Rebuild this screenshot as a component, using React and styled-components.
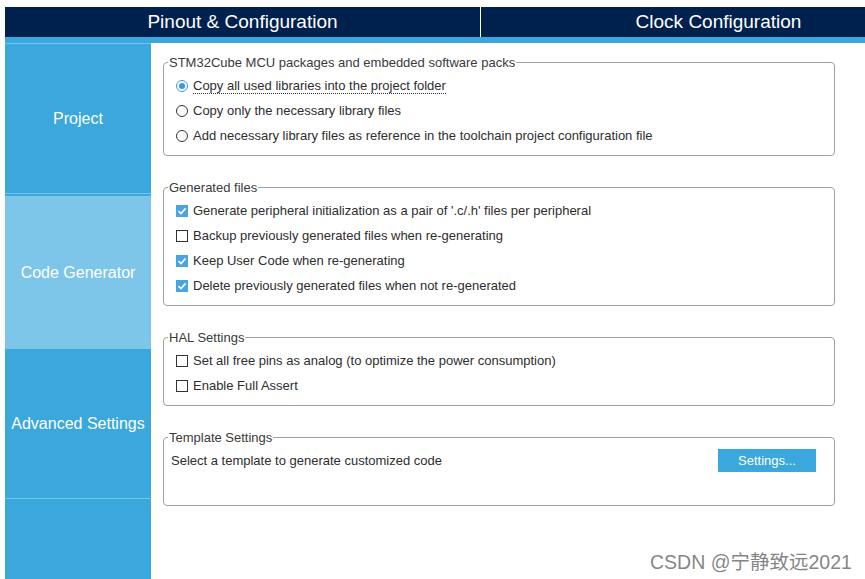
import styled, { createGlobalStyle } from 'styled-components';

const GlobalStyle = createGlobalStyle`
  html, body {
    margin: 0;
    padding: 0;
    background: #ffffff;
  }
  body {
    font-family: "Liberation Sans", Arial, sans-serif;
  }
`;

const Page = styled.div`
  position: relative;
  width: 865px;
  height: 579px;
  padding: 7px 0 0 5px;
  box-sizing: border-box;
  display: flex;
  flex-direction: column;
  overflow: hidden;
`;

const TopBar = styled.div`
  display: flex;
  height: 30px;
  background: #00204e;
  overflow: hidden;
`;

const Tab = styled.div`
  flex: 0 0 ${(p) => p.$width}px;
  display: flex;
  align-items: center;
  justify-content: center;
  color: #ffffff;
  font-size: 19px;
  white-space: nowrap;
  & + & {
    border-left: 1px solid #ffffff;
  }
`;

const Strip = styled.div`
  height: 6px;
  background: #3aa8dc;
`;

const Body = styled.div`
  flex: 1;
  display: flex;
`;

const Sidebar = styled.div`
  flex: 0 0 146px;
  background: #3aa8dc;
  border-top: 1px solid #74c4ec;
  display: flex;
  flex-direction: column;
`;

const NavItem = styled.div`
  height: ${(p) => (p.$active ? '153px' : '149px')};
  margin-bottom: ${(p) => (p.$active ? '0' : '2px')};
  border-bottom: ${(p) => (p.$active ? 'none' : '1px solid #74c4ec')};
  background: ${(p) => (p.$active ? '#7dc6e9' : 'transparent')};
  display: flex;
  align-items: center;
  justify-content: center;
  color: #ffffff;
  font-size: 16px;
`;

const Main = styled.div`
  flex: 1;
  padding: 12px 30px 0 12px;
  display: flex;
  flex-direction: column;
  gap: 24px;
`;

const Group = styled.fieldset`
  margin: 0;
  padding: 3px 12px 7px 4px;
  border: 1px solid #a0a0a0;
  border-radius: 4px;
  min-height: ${(p) => p.$minHeight || 0}px;
  box-sizing: border-box;
  display: flex;
  flex-direction: column;
`;

const Legend = styled.legend`
  padding: 0 1px;
  font-size: 13px;
  line-height: 15px;
  color: #3a3a3a;
`;

const Row = styled.div`
  height: 25px;
  display: flex;
  align-items: center;
  gap: 5px;
  padding-left: 8px;
  font-size: 13px;
  color: #2e2e2e;
`;

const Label = styled.span`
  line-height: 15px;
  border-bottom: 1px dotted ${(p) => (p.$focused ? '#333333' : 'transparent')};
`;

const Radio = styled.span`
  width: 12px;
  height: 12px;
  box-sizing: border-box;
  border-radius: 50%;
  border: 1px solid ${(p) => (p.$checked ? '#3c98e0' : '#333333')};
  background: #ffffff;
  display: flex;
  align-items: center;
  justify-content: center;
  &::after {
    content: '';
    width: 6px;
    height: 6px;
    border-radius: 50%;
    background: ${(p) => (p.$checked ? '#3c98e0' : 'transparent')};
  }
`;

const Box = styled.span`
  width: 12px;
  height: 12px;
  box-sizing: border-box;
  border: 1px solid ${(p) => (p.$checked ? '#4aa3e3' : '#333333')};
  background: ${(p) => (p.$checked ? '#4aa3e3' : '#ffffff')};
  display: flex;
  align-items: center;
  justify-content: center;
`;

const TemplateRow = styled.div`
  height: 25px;
  display: flex;
  align-items: center;
  justify-content: space-between;
  padding: 0 6px 0 3px;
  font-size: 13px;
  color: #2e2e2e;
`;

const Button = styled.div`
  width: 98px;
  height: 23px;
  background: #3aa8dc;
  color: #ffffff;
  font-size: 13px;
  display: flex;
  align-items: center;
  justify-content: center;
`;

const Watermark = styled.div`
  position: absolute;
  left: 650px;
  top: 546px;
  font-family: "Liberation Sans", "Noto Sans CJK SC", sans-serif;
  font-size: 19.5px;
  color: rgba(110, 110, 110, 0.85);
  text-shadow: 0 0 2px #ffffff;
  white-space: nowrap;
`;

function Check({ checked }) {
  return (
    <Box $checked={checked}>
      {checked && (
        <svg width="10" height="10" viewBox="0 0 10 10">
          <path d="M1.5 5.2 L4 7.6 L8.6 2.4" fill="none" stroke="#ffffff" strokeWidth="1.6" />
        </svg>
      )}
    </Box>
  );
}

const packOptions = [
  { label: 'Copy all used libraries into the project folder', checked: true },
  { label: 'Copy only the necessary library files' },
  { label: 'Add necessary library files as reference in the toolchain project configuration file' },
];

const generatedOptions = [
  { label: "Generate peripheral initialization as a pair of '.c/.h' files per peripheral", checked: true },
  { label: 'Backup previously generated files when re-generating' },
  { label: 'Keep User Code when re-generating', checked: true },
  { label: 'Delete previously generated files when not re-generated', checked: true },
];

const halOptions = [
  { label: 'Set all free pins as analog (to optimize the power consumption)' },
  { label: 'Enable Full Assert' },
];

export default function App() {
  return (
    <Page>
      <GlobalStyle />
      <TopBar>
        <Tab $width={475}>Pinout &amp; Configuration</Tab>
        <Tab $width={475}>Clock Configuration</Tab>
      </TopBar>
      <Strip />
      <Body>
        <Sidebar>
          <NavItem>Project</NavItem>
          <NavItem $active>Code Generator</NavItem>
          <NavItem>Advanced Settings</NavItem>
        </Sidebar>
        <Main>
          <Group>
            <Legend>STM32Cube MCU packages and embedded software packs</Legend>
            {packOptions.map((o, i) => (
              <Row key={o.label}>
                <Radio $checked={o.checked} />
                <Label $focused={i === 0}>{o.label}</Label>
              </Row>
            ))}
          </Group>
          <Group>
            <Legend>Generated files</Legend>
            {generatedOptions.map((o) => (
              <Row key={o.label}>
                <Check checked={o.checked} />
                <Label>{o.label}</Label>
              </Row>
            ))}
          </Group>
          <Group>
            <Legend>HAL Settings</Legend>
            {halOptions.map((o) => (
              <Row key={o.label}>
                <Check checked={o.checked} />
                <Label>{o.label}</Label>
              </Row>
            ))}
          </Group>
          <Group $minHeight={76}>
            <Legend>Template Settings</Legend>
            <TemplateRow>
              <span>Select a template to generate customized code</span>
              <Button>Settings...</Button>
            </TemplateRow>
          </Group>
        </Main>
      </Body>
      <Watermark>CSDN @宁静致远2021</Watermark>
    </Page>
  );
}
